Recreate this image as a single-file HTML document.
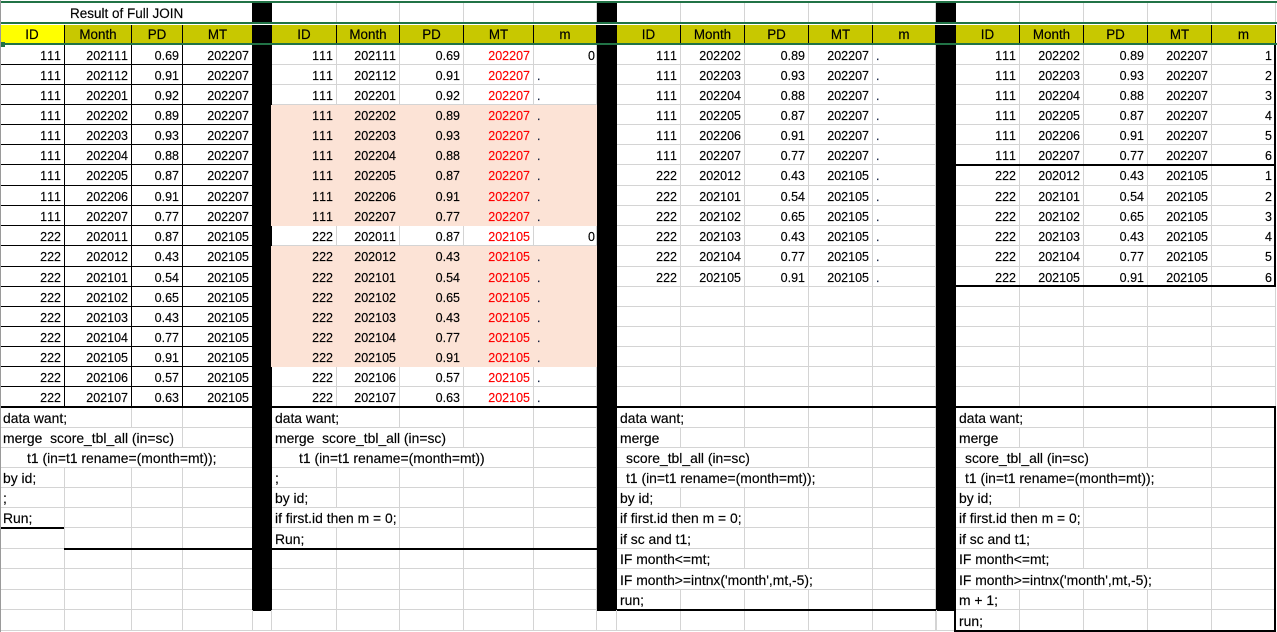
<!DOCTYPE html>
<html><head><meta charset="utf-8"><title>Result of Full JOIN</title>
<style>
html,body{margin:0;padding:0;background:#fff}
body{position:relative;width:1277px;height:632px;overflow:hidden;font:12.5px/14px "Liberation Sans",sans-serif;color:#000;font-kerning:none;-webkit-text-stroke:.15px currentColor}
table{position:absolute;top:3px;border-collapse:separate;border-spacing:0;table-layout:fixed}
tr{height:20px}
tr:nth-child(1){height:19px}
tr:nth-child(2){height:23px}
tr:nth-child(9),tr:nth-child(13),tr:nth-child(21),tr:nth-child(27),tr:nth-child(29),tr:nth-child(31){height:21px}
td{box-sizing:border-box;padding:2px 3px 0 0;border-right:1px solid #d4d4d4;border-bottom:1px solid #d4d4d4;text-align:right;white-space:pre;overflow:visible;vertical-align:middle}
tr.t td{border-bottom:0}
tr.h td{background:#c8c800;border-right:1px solid #000;border-bottom:0;text-align:center;padding:2px 0 0;font-size:13.4px}
tr.h td.y{background:#ff0}
td.l{text-align:left;padding:1px 0 0 3px;font-size:13.9px}
td.l.d{color:#013;font-size:12.5px;padding-top:2px}
td.z{padding-right:1px}
td.i1{padding-left:27px}
td.i2{padding-left:9px}
tr.k td{border-color:#000}
tr.p td{background:#fce3d6;border-color:#fce3d6}
.r{color:#f00}
i{position:absolute;display:block}
.b{background:#000}.g{background:#217346}.e{background:#d4d4d4}
</style></head><body>

<table style="left:0;width:253px">
<colgroup><col style="width:65px"><col style="width:67px"><col style="width:51px"><col style="width:70px"></colgroup>
<tr class="t"><td style="border:0"><td style="border:0"><td style="border:0"><td style="border:0">
<tr class="h"><td class="y">ID<td>Month<td>PD<td>MT
<tr class="k"><td>111<td>202111<td>0.69<td>202207
<tr class="k"><td>111<td>202112<td>0.91<td>202207
<tr class="k"><td>111<td>202201<td>0.92<td>202207
<tr class="k"><td>111<td>202202<td>0.89<td>202207
<tr class="k"><td>111<td>202203<td>0.93<td>202207
<tr class="k"><td>111<td>202204<td>0.88<td>202207
<tr class="k"><td>111<td>202205<td>0.87<td>202207
<tr class="k"><td>111<td>202206<td>0.91<td>202207
<tr class="k"><td>111<td>202207<td>0.77<td>202207
<tr class="k"><td>222<td>202011<td>0.87<td>202105
<tr class="k"><td>222<td>202012<td>0.43<td>202105
<tr class="k"><td>222<td>202101<td>0.54<td>202105
<tr class="k"><td>222<td>202102<td>0.65<td>202105
<tr class="k"><td>222<td>202103<td>0.43<td>202105
<tr class="k"><td>222<td>202104<td>0.77<td>202105
<tr class="k"><td>222<td>202105<td>0.91<td>202105
<tr class="k"><td>222<td>202106<td>0.57<td>202105
<tr class="k"><td>222<td>202107<td>0.63<td>202105
<tr><td class="l" colspan="2">data want;<td><td>
<tr><td class="l" colspan="3">merge  score_tbl_all (in=sc)<td>
<tr><td class="l i1" colspan="4">t1 (in=t1 rename=(month=mt));
<tr><td class="l">by id;<td><td><td>
<tr><td class="l">;<td><td><td>
<tr><td class="l">Run;<td><td><td>
<tr><td><td><td><td>
<tr><td><td><td><td>
<tr><td><td><td><td>
<tr><td><td><td><td>
<tr><td><td><td><td>
</table>

<table style="left:272px;width:325px">
<colgroup><col style="width:65px"><col style="width:63px"><col style="width:64px"><col style="width:70px"><col style="width:63px"></colgroup>
<tr class="t"><td><td><td><td><td>
<tr class="h"><td>ID<td>Month<td>PD<td>MT<td>m
<tr><td>111<td>202111<td>0.69<td class="r">202207<td class="z">0
<tr><td>111<td>202112<td>0.91<td class="r">202207<td class="l d">.
<tr><td>111<td>202201<td>0.92<td class="r">202207<td class="l d">.
<tr class="p"><td>111<td>202202<td>0.89<td class="r">202207<td class="l d">.
<tr class="p"><td>111<td>202203<td>0.93<td class="r">202207<td class="l d">.
<tr class="p"><td>111<td>202204<td>0.88<td class="r">202207<td class="l d">.
<tr class="p"><td>111<td>202205<td>0.87<td class="r">202207<td class="l d">.
<tr class="p"><td>111<td>202206<td>0.91<td class="r">202207<td class="l d">.
<tr class="p"><td>111<td>202207<td>0.77<td class="r">202207<td class="l d">.
<tr><td>222<td>202011<td>0.87<td class="r">202105<td class="z">0
<tr class="p"><td>222<td>202012<td>0.43<td class="r">202105<td class="l d">.
<tr class="p"><td>222<td>202101<td>0.54<td class="r">202105<td class="l d">.
<tr class="p"><td>222<td>202102<td>0.65<td class="r">202105<td class="l d">.
<tr class="p"><td>222<td>202103<td>0.43<td class="r">202105<td class="l d">.
<tr class="p"><td>222<td>202104<td>0.77<td class="r">202105<td class="l d">.
<tr class="p"><td>222<td>202105<td>0.91<td class="r">202105<td class="l d">.
<tr><td>222<td>202106<td>0.57<td class="r">202105<td class="l d">.
<tr><td>222<td>202107<td>0.63<td class="r">202105<td class="l d">.
<tr><td class="l" colspan="2">data want;<td><td><td>
<tr><td class="l" colspan="3">merge  score_tbl_all (in=sc)<td><td>
<tr><td class="l i1" colspan="4">t1 (in=t1 rename=(month=mt))<td>
<tr><td class="l">;<td><td><td><td>
<tr><td class="l">by id;<td><td><td><td>
<tr><td class="l" colspan="2">if first.id then m = 0;<td><td><td>
<tr><td class="l">Run;<td><td><td><td>
<tr><td><td><td><td><td>
<tr><td><td><td><td><td>
<tr><td><td><td><td><td>
<tr><td><td><td><td><td>
</table>

<table style="left:617px;width:319px">
<colgroup><col style="width:64px"><col style="width:64px"><col style="width:64px"><col style="width:64px"><col style="width:63px"></colgroup>
<tr class="t"><td><td><td><td><td>
<tr class="h"><td>ID<td>Month<td>PD<td>MT<td>m
<tr><td>111<td>202202<td>0.89<td>202207<td class="l d">.
<tr><td>111<td>202203<td>0.93<td>202207<td class="l d">.
<tr><td>111<td>202204<td>0.88<td>202207<td class="l d">.
<tr><td>111<td>202205<td>0.87<td>202207<td class="l d">.
<tr><td>111<td>202206<td>0.91<td>202207<td class="l d">.
<tr><td>111<td>202207<td>0.77<td>202207<td class="l d">.
<tr><td>222<td>202012<td>0.43<td>202105<td class="l d">.
<tr><td>222<td>202101<td>0.54<td>202105<td class="l d">.
<tr><td>222<td>202102<td>0.65<td>202105<td class="l d">.
<tr><td>222<td>202103<td>0.43<td>202105<td class="l d">.
<tr><td>222<td>202104<td>0.77<td>202105<td class="l d">.
<tr><td>222<td>202105<td>0.91<td>202105<td class="l d">.
<tr><td><td><td><td><td>
<tr><td><td><td><td><td>
<tr><td><td><td><td><td>
<tr><td><td><td><td><td>
<tr><td><td><td><td><td>
<tr><td><td><td><td><td>
<tr><td class="l" colspan="2">data want;<td><td><td>
<tr><td class="l">merge<td><td><td><td>
<tr><td class="l i2" colspan="3">score_tbl_all (in=sc)<td><td>
<tr><td class="l i2" colspan="4">t1 (in=t1 rename=(month=mt));<td>
<tr><td class="l">by id;<td><td><td><td>
<tr><td class="l" colspan="2">if first.id then m = 0;<td><td><td>
<tr><td class="l" colspan="2">if sc and t1;<td><td><td>
<tr><td class="l" colspan="2">IF month&lt;=mt;<td><td><td>
<tr><td class="l" colspan="4">IF month&gt;=intnx('month',mt,-5);<td>
<tr><td class="l">run;<td><td><td><td>
<tr><td><td><td><td><td>
</table>

<table style="left:956px;width:320px">
<colgroup><col style="width:64px"><col style="width:64px"><col style="width:64px"><col style="width:64px"><col style="width:64px"></colgroup>
<tr class="t"><td><td><td><td><td>
<tr class="h"><td>ID<td>Month<td>PD<td>MT<td>m
<tr><td>111<td>202202<td>0.89<td>202207<td>1
<tr><td>111<td>202203<td>0.93<td>202207<td>2
<tr><td>111<td>202204<td>0.88<td>202207<td>3
<tr><td>111<td>202205<td>0.87<td>202207<td>4
<tr><td>111<td>202206<td>0.91<td>202207<td>5
<tr><td>111<td>202207<td>0.77<td>202207<td>6
<tr><td>222<td>202012<td>0.43<td>202105<td>1
<tr><td>222<td>202101<td>0.54<td>202105<td>2
<tr><td>222<td>202102<td>0.65<td>202105<td>3
<tr><td>222<td>202103<td>0.43<td>202105<td>4
<tr><td>222<td>202104<td>0.77<td>202105<td>5
<tr><td>222<td>202105<td>0.91<td>202105<td>6
<tr><td><td><td><td><td>
<tr><td><td><td><td><td>
<tr><td><td><td><td><td>
<tr><td><td><td><td><td>
<tr><td><td><td><td><td>
<tr><td><td><td><td><td>
<tr><td class="l" colspan="2">data want;<td><td><td>
<tr><td class="l">merge<td><td><td><td>
<tr><td class="l i2" colspan="3">score_tbl_all (in=sc)<td><td>
<tr><td class="l i2" colspan="4">t1 (in=t1 rename=(month=mt));<td>
<tr><td class="l">by id;<td><td><td><td>
<tr><td class="l" colspan="2">if first.id then m = 0;<td><td><td>
<tr><td class="l" colspan="2">if sc and t1;<td><td><td>
<tr><td class="l" colspan="2">IF month&lt;=mt;<td><td><td>
<tr><td class="l" colspan="4">IF month&gt;=intnx('month',mt,-5);<td>
<tr><td class="l">m + 1;<td><td><td><td>
<tr><td class="l">run;<td><td><td><td>
</table>

<div style="position:absolute;left:70px;top:7px;font-size:13.5px">Result of Full JOIN</div>

<!-- black separator bars -->
<i class="b" style="left:252px;top:3px;width:20px;height:608px"></i>
<i class="b" style="left:597px;top:3px;width:20px;height:608px"></i>
<i class="b" style="left:936px;top:3px;width:20px;height:608px"></i>
<i class="b" style="left:596px;top:25px;width:1px;height:18px"></i>
<i class="b" style="left:935px;top:25px;width:1px;height:18px"></i>
<i style="left:271px;top:105px;width:1px;height:121px;background:#fce3d6"></i>
<i style="left:271px;top:246px;width:1px;height:121px;background:#fce3d6"></i>

<!-- grid below bars -->
<i class="e" style="left:252px;top:610px;width:1px;height:21px"></i>
<i class="e" style="left:271px;top:610px;width:1px;height:21px"></i>
<i class="e" style="left:596px;top:610px;width:1px;height:21px"></i>
<i class="e" style="left:616px;top:610px;width:1px;height:21px"></i>
<i class="e" style="left:936px;top:610px;width:1px;height:21px"></i>
<i class="e" style="left:252px;top:630px;width:20px;height:1px"></i>
<i class="e" style="left:597px;top:630px;width:20px;height:1px"></i>
<i class="e" style="left:936px;top:630px;width:20px;height:1px"></i>

<!-- green selection lines -->
<i class="g" style="left:0;top:1px;width:1277px;height:2px"></i>
<i class="g" style="left:0;top:22px;width:1277px;height:2px"></i>
<i style="left:0;top:24px;width:1277px;height:1px;background:#fff"></i>
<i class="g" style="left:0;top:43px;width:1277px;height:2px"></i>
<i class="g" style="left:0;top:42px;width:5px;height:5px"></i>

<!-- left sheet edge -->
<i style="left:0;top:0;width:1px;height:632px;background:#9a9a9a"></i>

<!-- thick borders -->
<i class="b" style="left:1px;top:406px;width:251px;height:2px"></i>
<i class="b" style="left:1px;top:527px;width:63px;height:2px"></i>
<i class="b" style="left:64px;top:548px;width:188px;height:2px"></i>
<i class="b" style="left:272px;top:406px;width:325px;height:2px"></i>
<i class="b" style="left:272px;top:548px;width:325px;height:2px"></i>
<i class="b" style="left:617px;top:406px;width:319px;height:2px"></i>
<i class="b" style="left:617px;top:609px;width:319px;height:2px"></i>
<i class="b" style="left:956px;top:164px;width:320px;height:2px"></i>
<i class="b" style="left:956px;top:285px;width:320px;height:2px"></i>
<i class="b" style="left:1274px;top:45px;width:2px;height:242px"></i>
<i class="b" style="left:956px;top:406px;width:320px;height:2px"></i>
<i class="b" style="left:1274px;top:406px;width:2px;height:226px"></i>
<i class="b" style="left:954px;top:630px;width:322px;height:2px"></i>
<i class="b" style="left:954px;top:610px;width:2px;height:22px"></i>
</body></html>
